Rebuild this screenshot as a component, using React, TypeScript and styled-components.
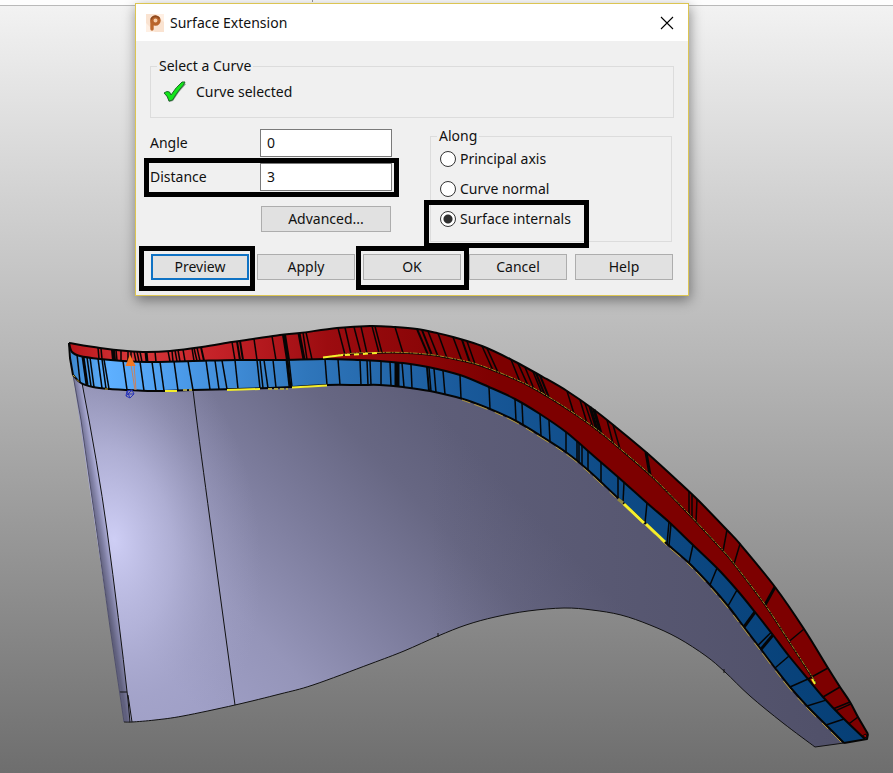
import React from "react";
import styled, { createGlobalStyle, css } from "styled-components";

const GlobalStyle = createGlobalStyle`
  * { box-sizing: border-box; }
  html, body { margin: 0; height: 100%; }
  body { overflow: hidden; }
  body, button, input {
    font-family: "Noto Sans", "Open Sans", sans-serif;
    font-size: 14px;
    line-height: 20px;
    color: #111;
  }
`;

const Viewport = styled.main`
  position: relative;
  min-height: 100vh;
  overflow: hidden;
  background: linear-gradient(#f3f3f3, #b7b7b7 46%, #6e6e6e);
`;

const HostToolbar = styled.header`
  height: 6px;
  background: #fdfdfd;
  border-bottom: 1px solid #b9b9b9;
`;

const HostDivider = styled.div`
  width: 1px;
  height: 2px;
  margin-left: 312px;
  background: #999;
`;

const Scene = styled.svg`
  position: absolute;
  left: 0;
  top: 0;
`;

const Dialog = styled.section`
  position: absolute;
  left: 135px;
  top: 3px;
  width: 554px;
  background: #f0f0f0;
  border: 1px solid #dcc552;
  box-shadow: 1px 4px 12px rgba(0, 0, 0, 0.42);
`;

const TitleBar = styled.header`
  display: flex;
  align-items: center;
  gap: 6px;
  height: 37px;
  padding: 0 12px 0 10px;
  background: #fff;
`;

const Title = styled.h1`
  flex: 1;
  margin: 0;
  font-size: 14px;
  font-weight: 400;
`;

const CloseButton = styled.button`
  display: flex;
  padding: 2px;
  border: 0;
  background: none;
`;

const DialogBody = styled.form`
  padding: 15px 14px 15px;
`;

const Group = styled.fieldset`
  margin: 0;
  min-width: 0;
  border: 1px solid #dcdcdc;
  padding: 0 8px;
`;

const GroupTitle = styled.legend`
  margin-left: -2px;
  padding: 0 2px;
`;

const Status = styled.div`
  display: flex;
  align-items: center;
  gap: 10px;
  height: 20px;
  margin: 6px 0 15px 4px;
`;

const Columns = styled.div`
  display: grid;
  grid-template-columns: 242px 1fr;
  gap: 38px;
  padding: 8px 2px 0 0;
`;

const Fields = styled.div`
  display: flex;
  flex-direction: column;
  gap: 6px;
  padding-top: 3px;
`;

const Field = styled.div`
  position: relative;
  display: grid;
  grid-template-columns: 110px 1fr;
  align-items: center;
`;

const TextBox = styled.input`
  width: 100%;
  height: 28px;
  padding: 0 6px 2px;
  border: 1px solid #7a7a7a;
  border-radius: 0;
  background: #fff;
`;

const PushButton = styled.button<{ $focused?: boolean }>`
  display: block;
  width: 100%;
  height: 26px;
  padding: 0;
  border: 1px solid #adadad;
  border-radius: 0;
  background: #e1e1e1;
  ${(p) => p.$focused && css`border: 2px solid #0f72c4;`}
`;

const AdvancedSlot = styled.div`
  margin: 9px 1px 0 111px;
`;

const Options = styled.div`
  display: flex;
  flex-direction: column;
  align-items: flex-start;
  gap: 10px;
  margin: 3px 0 12px;
`;

const Option = styled.label`
  position: relative;
  display: flex;
  align-items: center;
  gap: 4px;
`;

const Radio = styled.input`
  appearance: none;
  width: 16px;
  height: 16px;
  margin: 0 0 0 1px;
  border: 1px solid #333;
  border-radius: 50%;
  background: #fff;
  &:checked {
    background: radial-gradient(circle, #2e2e2e 4px, #fff 5px);
  }
`;

const Actions = styled.footer`
  display: grid;
  grid-template-columns: repeat(5, 1fr);
  gap: 8px;
  margin-top: 12px;
  padding: 0 1px;
`;

const Action = styled.div`
  position: relative;
`;

const Marker = styled.span<{ $inset: string }>`
  position: absolute;
  z-index: 1;
  inset: ${(p) => p.$inset};
  border: 5px solid #000;
  pointer-events: none;
`;

type Point = [number, number];
type Rib = [number, number, number?];

const outer: Point[] = [
  [69, 343], [100, 348], [127, 351], [147, 352], [170, 351], [202, 347], [232, 342], [253, 339],
  [280, 335], [300, 333], [337, 328], [370, 326], [395, 327], [417, 329], [437, 333], [453, 337],
  [482, 346], [510, 359], [543, 377], [567, 391], [593, 409], [617, 428], [647, 453], [680, 483],
  [698, 500], [727, 530], [740, 544], [775, 587], [804, 629], [828, 668], [840, 687], [850, 702],
  [858, 717], [868, 734],
];
const seam: Point[] = [
  [69, 343], [72, 352], [80, 356], [100, 359], [123, 361], [147, 362], [193, 361], [237, 360],
  [280, 360], [325, 359], [360, 360], [380, 361], [403, 363], [428, 367],
  [460, 375], [489, 387], [515, 399], [540, 414], [566, 432], [588, 451],
  [618, 477], [647, 503], [669, 522], [693, 545], [717, 568], [737, 590], [755, 612], [773, 635],
  [789, 656], [808, 679], [823, 697], [843, 718], [865, 739],
];
const lower: Point[] = [
  [73, 375], [81, 383], [93, 387], [110, 389], [128, 390], [148, 391], [163, 391], [193, 390],
  [237, 389], [270, 388], [292, 387], [327, 385], [360, 385], [380, 385], [403, 387], [430, 391],
  [463, 399], [490, 409], [516, 421], [541, 436], [567, 453], [588, 470],
  [618, 498], [645, 523], [666, 543], [689, 563], [710, 585], [728, 606], [744, 627], [760, 648],
  [775, 668], [790, 687], [807, 706], [826, 725], [844, 743],
];
const crease: Point[] = [
  [323, 358], [350, 354], [377, 353], [403, 353], [430, 355], [453, 359], [475, 364], [497, 372],
  [527, 385], [553, 400], [573, 413], [597, 430], [620, 449], [650, 475], [673, 498], [697, 523],
  [723, 551], [734, 564], [765, 605], [790, 643], [812, 677], [816, 684],
];
const base: Point[] = [
  [815, 747], [783, 723], [750, 696], [725, 672], [706, 656], [678, 638], [650, 625],
  [621, 615], [592, 610], [564, 608], [528, 611], [495, 617], [466, 625], [438, 636], [404, 651],
  [370, 664], [313, 685], [280, 694], [235, 705], [183, 716], [155, 720], [132, 722], [124, 722],
];

const blueRibs: Rib[] = [
  [77, 80], [83, 87, 3], [87, 91], [90, 94], [98, 102], [102, 106], [104, 109], [123, 127],
  [140, 144], [152, 156], [160, 164], [174, 178], [188, 193], [206, 210], [215, 219], [222, 227],
  [235, 238], [257, 260], [260, 263], [264, 268], [273, 276], [287, 290, 3], [289, 292], [325, 327],
  [338, 340], [360, 361], [367, 368], [370, 371], [381, 381], [390, 391], [397, 397, 5], [402, 404],
  [411, 412], [427, 429, 2], [429, 431], [434, 436], [443, 445], [460, 461], [489, 490], [515, 516],
  [522, 523], [540, 541], [549, 550], [566, 566], [577, 577], [579, 579], [582, 582], [588, 588],
  [601, 601], [618, 618], [624, 623], [647, 645], [669, 667], [671, 669], [693, 689], [717, 710],
  [737, 728], [755, 744, 3], [771, 758], [773, 761, 3], [789, 775], [808, 790], [826, 807], [844, 826],
];
const redRibs: Rib[] = [
  [98, 99], [101, 102], [113, 114, 4], [116, 117], [121, 121], [128, 128], [131, 131], [134, 136],
  [137, 139], [140, 142], [146, 147, 3], [155, 156], [168, 170], [172, 173], [175, 177], [178, 180],
  [183, 185], [192, 194], [194, 197], [197, 200], [201, 204, 2], [232, 235], [237, 240, 2],
  [240, 243, 2], [254, 257], [272, 276], [284, 288, 4], [299, 304, 3], [303, 307], [306, 312],
];
const innerRedRibs: Rib[] = [
  [338, 345], [345, 351], [354, 361], [361, 367], [372, 379], [375, 382], [395, 403], [417, 428, 2],
  [422, 432, 2], [428, 438], [438, 447], [453, 462], [462, 470, 2], [467, 475], [482, 493],
  [487, 498], [511, 520], [518, 528], [525, 534], [533, 542], [536, 545, 2], [540, 549, 2],
  [567, 574], [580, 587], [585, 593], [590, 597, 3], [594, 601, 3], [607, 613], [613, 620],
  [646, 650, 3], [689, 689], [692, 692], [697, 696], [727, 723], [740, 734], [775, 765, 3], [804, 789],
];
const tipRibs: Rib[] = [[828, 808], [840, 823], [850, 834], [851, 836], [858, 849]];

const heightAt = (line: Point[], x: number) => {
  const i = Math.max(1, line.findIndex((p) => p[0] >= x));
  const [x0, y0] = line[i - 1];
  const [x1, y1] = line[i];
  return y0 + ((y1 - y0) * (x - x0)) / (x1 - x0);
};

const curve = (line: Point[], start = "M") =>
  line.reduce((d, p, i) => {
    if (i === 0) return `${start}${p[0]} ${p[1]}`;
    const prev = line[i - 1];
    const before = line[i - 2] ?? prev;
    const after = line[i + 1] ?? p;
    const c1 = [prev[0] + (p[0] - before[0]) / 6, prev[1] + (p[1] - before[1]) / 6];
    const c2 = [p[0] - (after[0] - prev[0]) / 6, p[1] - (after[1] - prev[1]) / 6];
    return `${d}C${c1.join(" ")} ${c2.join(" ")} ${p.join(" ")}`;
  }, "");
const band = (a: Point[], b: Point[]) => `${curve(a)}${curve([...b].reverse(), "L")}Z`;
const bodyShape = `${curve(lower)}${curve(base, "L")}Z`;

function Ribs({ from, to, ribs }: { from: Point[]; to: Point[]; ribs: Rib[] }) {
  return (
    <>
      {ribs.map(([a, b, w = 1.5], i) => (
        <line key={i} x1={a} y1={heightAt(from, a)} x2={b} y2={heightAt(to, b)} strokeWidth={w} />
      ))}
    </>
  );
}

function SurfaceModel() {
  return (
    <Scene width="893" height="773" viewBox="0 0 893 773" role="img" aria-label="Extended surface model">
      <defs>
        <linearGradient id="body" gradientUnits="userSpaceOnUse" x1="190" y1="700" x2="465" y2="440">
          <stop offset="0" stopColor="#9f9fc6" />
          <stop offset=".25" stopColor="#9595b9" />
          <stop offset=".55" stopColor="#7b7b9b" />
          <stop offset=".8" stopColor="#676783" />
          <stop offset="1" stopColor="#5e5e79" />
        </linearGradient>
        <linearGradient id="shade" gradientUnits="userSpaceOnUse" x1="430" y1="0" x2="830" y2="0">
          <stop offset="0" stopColor="#4b4b63" stopOpacity="0" />
          <stop offset="1" stopColor="#4b4b63" stopOpacity=".7" />
        </linearGradient>
        <radialGradient id="glow" gradientUnits="userSpaceOnUse" cx="0" cy="0" r="1" gradientTransform="translate(114 540) rotate(-8) scale(145 230)">
          <stop offset="0" stopColor="#cecef5" />
          <stop offset=".4" stopColor="#bcbce2" stopOpacity=".68" />
          <stop offset=".7" stopColor="#adadd2" stopOpacity=".28" />
          <stop offset="1" stopColor="#a5a5ca" stopOpacity="0" />
        </radialGradient>
        <linearGradient id="red" gradientUnits="userSpaceOnUse" x1="69" y1="0" x2="500" y2="0">
          <stop offset="0" stopColor="#b51318" />
          <stop offset=".15" stopColor="#d9383b" />
          <stop offset=".35" stopColor="#c32127" />
          <stop offset=".6" stopColor="#9c0c10" />
          <stop offset="1" stopColor="#7d0000" />
        </linearGradient>
        <linearGradient id="blue" gradientUnits="userSpaceOnUse" x1="69" y1="0" x2="860" y2="0">
          <stop offset="0" stopColor="#3c86cc" />
          <stop offset=".05" stopColor="#5eb0ff" />
          <stop offset=".13" stopColor="#4d9ded" />
          <stop offset=".3" stopColor="#2f76bb" />
          <stop offset=".5" stopColor="#19599a" />
          <stop offset=".7" stopColor="#0d4a85" />
          <stop offset="1" stopColor="#063f76" />
        </linearGradient>
        <linearGradient id="edge" gradientUnits="userSpaceOnUse" x1="96" y1="535" x2="108" y2="533">
          <stop offset="0" stopColor="#60607d" />
          <stop offset=".45" stopColor="#8080a4" />
          <stop offset="1" stopColor="#b2b2dc" />
        </linearGradient>
      </defs>

      <path d={bodyShape} fill="url(#body)" />
      <path d={bodyShape} fill="url(#shade)" />
      <path d={bodyShape} fill="url(#glow)" />
      <path d="M73 375L82 383Q98 465 107 530Q119 620 128 700L130 722H124L110 627L97 533L81 420Z" fill="url(#edge)" />
      <g fill="none" stroke="#111" strokeWidth="1">
        <path d="M82 383Q98 465 107 530Q119 620 128 700L130 722M128 695L132 722M120 692H127" />
        <path d="M193 390C199 440 204 475 210 520L235 705" />
        <path d="M73 375L81 420L97 533L110 627L124 722" stroke="#50506a" />
        <path d={curve(base)} />
        <path d="M815 747L844 743M438 633V637M724 669V673" />
      </g>

      <path d={band(outer, seam)} fill="url(#red)" />
      <path d={band(seam, lower)} fill="url(#blue)" />
      <g stroke="#050505" fill="none">
        <Ribs from={outer} to={seam} ribs={redRibs} />
        <Ribs from={outer} to={crease} ribs={innerRedRibs} />
        <Ribs from={outer} to={seam} ribs={tipRibs} />
        <Ribs from={seam} to={lower} ribs={blueRibs} />
      </g>
      <g fill="none" stroke="#050505" strokeLinejoin="round">
        <path d={curve(crease)} strokeWidth="1.5" />
        <path d={curve(outer)} strokeWidth="2" />
        <path d={curve(seam)} strokeWidth="2" />
        <path d={curve(lower)} strokeWidth="2" />
        <path d="M69 343L70 358L73 375M868 734L867 739L844 743" strokeWidth="2" />
        <path d="M862 736L866 734L867 738Z" fill="#b00" strokeWidth="1" />
      </g>
      <g fill="none" stroke="#c9a72d">
        <path d={curve(crease)} strokeDasharray="5 1 2 1" strokeWidth=".8" transform="translate(0 -.5)" />
        <path d={curve(lower.slice(16))} strokeDasharray="9 4 14 8" strokeWidth=".8" transform="translate(-1 1)" />
        <path d="M73 375L81 384M105 389H111" strokeDasharray="3 3" />
      </g>
      <g fill="none" stroke="#f5ee2c" strokeWidth="2">
        <path d="M165 391H177M227 390L260 389M292 387.500L327 385.500M323 357.500L343 355" />
        <path d="M345 355L378 353" strokeDasharray="5 4" />
        <path d="M183 390H192M268 389H288" stroke="#aaa14b" strokeDasharray="4 2" />
        <path d="M624 504L644 523M646 524L665 542" strokeWidth="3" />
        <path d="M618 499L623 503" stroke="#8d8643" strokeWidth="3" />
        <path d="M812 679L815 684" />
      </g>
      <g fill="none" stroke="#f37824">
        <path d="M131 365L135 390M134 365L136 390" stroke="#c78260" />
        <path d="M130 357L127 365H134Z" fill="#f37824" strokeWidth="2" />
        <path d="M127 391L132 390L134 394L130 398L126 396ZM127 391L130 398M132 390L126 396M127 394H134" stroke="#2934b8" />
      </g>
    </Scene>
  );
}

function AppIcon() {
  return (
    <svg width="18" height="18" viewBox="0 0 18 18" aria-hidden="true">
      <path d="M0 0H18V18H0Z" fill="#fae3d1" />
      <path d="M0 9L9 18H0ZM18 0V8L9 0Z" fill="#fff0e4" />
      <path d="M6 15V6.500" fill="none" stroke="#bd682c" strokeWidth="3.400" strokeLinecap="round" />
      <circle cx="9.500" cy="6.500" r="3.600" fill="#f6cda9" stroke="#b9652b" strokeWidth="3.200" />
      <path d="M5 5.500Q6 2.500 9.500 2.200Q12 2.200 13.500 4.500" fill="none" stroke="#8d4a20" strokeWidth="1.600" />
    </svg>
  );
}

function TickIcon() {
  return (
    <svg width="23" height="22" viewBox="0 0 23 22" aria-hidden="true">
      <path d="M2 13Q4 11 7 12L8 15Q13 7 20 2L23 3Q16 10 10 20L6 21Q5 17 2 13Z" fill="#3b5141" opacity=".6" />
      <path d="M1 12Q4 9.500 6.500 11L8 14Q13 6 19 1H22Q21 4 17 8Q13 13 9.500 19L6 20Q5 15 1 12Z" fill="#13e51b" stroke="#1c6b28" />
    </svg>
  );
}

const directions = ["Principal axis", "Curve normal", "Surface internals"];

export default function App() {
  return (
    <>
      <GlobalStyle />
      <Viewport>
        <HostToolbar><HostDivider /></HostToolbar>
        <SurfaceModel />
        <Dialog role="dialog" aria-labelledby="dialog-title">
          <TitleBar>
            <AppIcon />
            <Title id="dialog-title">Surface Extension</Title>
            <CloseButton type="button" aria-label="Close">
              <svg width="14" height="14" viewBox="0 0 14 14" aria-hidden="true">
                <path d="M1 1L13 13M13 1L1 13" stroke="#000" strokeWidth="1.100" />
              </svg>
            </CloseButton>
          </TitleBar>
          <DialogBody onSubmit={(e) => e.preventDefault()}>
            <Group>
              <GroupTitle>Select a Curve</GroupTitle>
              <Status><TickIcon />Curve selected</Status>
            </Group>
            <Columns>
              <Fields>
                <Field>
                  <label htmlFor="angle">Angle</label>
                  <TextBox id="angle" defaultValue="0" />
                </Field>
                <Field>
                  <label htmlFor="distance">Distance</label>
                  <TextBox id="distance" defaultValue="3" />
                  <Marker $inset="-5px -7px -6px -6px" />
                </Field>
                <AdvancedSlot><PushButton type="button">Advanced...</PushButton></AdvancedSlot>
              </Fields>
              <Group>
                <GroupTitle>Along</GroupTitle>
                <Options>
                  {directions.map((name) => (
                    <Option key={name}>
                      <Radio type="radio" name="along" defaultChecked={name === "Surface internals"} />
                      {name}
                      {name === "Surface internals" && <Marker $inset="-9px -18px -19px -15px" />}
                    </Option>
                  ))}
                </Options>
              </Group>
            </Columns>
            <Actions>
              <Action>
                <PushButton type="button" $focused>Preview</PushButton>
                <Marker $inset="-8px -6px -11px -12px" />
              </Action>
              <Action><PushButton type="button">Apply</PushButton></Action>
              <Action>
                <PushButton type="submit">OK</PushButton>
                <Marker $inset="-8px -8px -10px -7px" />
              </Action>
              <Action><PushButton type="button">Cancel</PushButton></Action>
              <Action><PushButton type="button">Help</PushButton></Action>
            </Actions>
          </DialogBody>
        </Dialog>
      </Viewport>
    </>
  );
}
